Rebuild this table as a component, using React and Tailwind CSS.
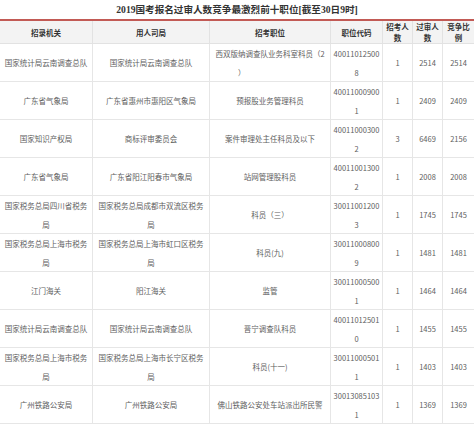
import React from "react";

const rows = [
  [["国家统计局云南调查总队"], ["国家统计局云南调查总队"], ["西双版纳调查队业务科室科员（2", "）"], ["40011012500", "8"], "1", "2514", "2514"],
  [["广东省气象局"], ["广东省惠州市惠阳区气象局"], ["预报股业务管理科员"], ["40011000900", "1"], "1", "2409", "2409"],
  [["国家知识产权局"], ["商标评审委员会"], ["案件审理处主任科员及以下"], ["40011000300", "2"], "3", "6469", "2156"],
  [["广东省气象局"], ["广东省阳江阳春市气象局"], ["站网管理股科员"], ["40011001300", "2"], "1", "2008", "2008"],
  [["国家税务总局四川省税务", "局"], ["国家税务总局成都市双流区税务", "局"], ["科员（三）"], ["30011001200", "3"], "1", "1745", "1745"],
  [["国家税务总局上海市税务", "局"], ["国家税务总局上海市虹口区税务", "局"], ["科员(九)"], ["30011000800", "9"], "1", "1481", "1481"],
  [["江门海关"], ["阳江海关"], ["监管"], ["30011000500", "1"], "1", "1464", "1464"],
  [["国家统计局云南调查总队"], ["国家统计局云南调查总队"], ["晋宁调查队科员"], ["40011012501", "0"], "1", "1455", "1455"],
  [["国家税务总局上海市税务", "局"], ["国家税务总局上海市长宁区税务", "局"], ["科员(十一)"], ["30011000501", "1"], "1", "1403", "1403"],
  [["广州铁路公安局"], ["广州铁路公安局"], ["佛山铁路公安处车站派出所民警"], ["30013085103", "1"], "1", "1369", "1369"],
];

const headers = [["招录机关"], ["用人司局"], ["招考职位"], ["职位代码"], ["招考人", "数"], ["过审人", "数"], ["竞争比", "例"]];

function Cell({ lines, last, special }) {
  const arr = Array.isArray(lines) ? lines : [lines];
  return (
    <div
      className={
        "flex flex-col justify-center items-center h-[38px] border-b border-[#e6e6e6] text-[7.5px] leading-[19px] text-[#606060] whitespace-nowrap overflow-hidden " +
        (last ? "" : "border-r")
      }
    >
      {special ? (
        <>
          <div className="w-full text-center">{arr[0]}</div>
          <div className="w-full text-left pl-[28px]">{arr[1]}</div>
        </>
      ) : (
        arr.map((l, i) => <div key={i}>{l}</div>)
      )}
    </div>
  );
}

export default function App() {
  return (
    <div
      className="w-[474px] h-[425px] bg-white overflow-hidden"
      style={{ fontFamily: '"Noto Sans CJK SC", "Noto Sans", sans-serif' }}
    >
      <div
        className="h-[19px] flex items-center justify-center text-[9.6px] font-bold text-[#333] pt-[1px]"
        style={{ fontFamily: '"Liberation Serif", "Noto Sans CJK SC", serif' }}
      >
        2019国考报名过审人数竞争最激烈前十职位[截至30日9时]
      </div>
      <div className="h-[2px] bg-[#c25a55]" />
      <div className="grid grid-cols-[93px_117px_121px_52px_30px_30px_31px]">
        {headers.map((h, i) => (
          <div
            key={i}
            className={
              "h-[23px] flex flex-col items-center justify-center bg-[#f3f3f3] border-b border-[#e2e2e2] text-[7.5px] leading-[11px] font-bold text-[#333] " +
              (i === headers.length - 1 ? "" : "border-r")
            }
          >
            {h.map((l, j) => (
              <div key={j}>{l}</div>
            ))}
          </div>
        ))}
        {rows.map((r, ri) =>
          r.map((c, ci) => (
            <Cell key={ri + "-" + ci} lines={c} last={ci === 6} special={ri === 0 && ci === 2} />
          ))
        )}
      </div>
    </div>
  );
}
